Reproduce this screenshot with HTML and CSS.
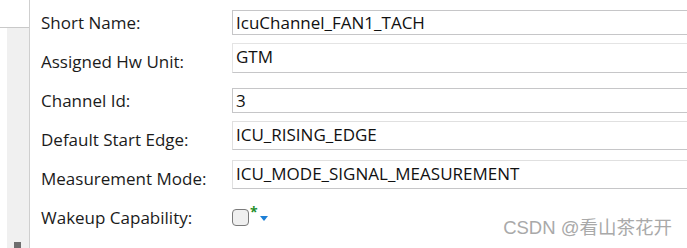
FILE: index.html
```html
<!DOCTYPE html>
<html lang="en">
<head>
    <meta charset="UTF-8">
    <title>Icu Channel</title>
    <link rel="stylesheet" href="styles.css">
</head>
<body>
<div class="page">
    <div class="side">
        <div class="side-head"></div>
        <div class="side-body">
            <div class="thumb"></div>
        </div>
    </div>
    <div class="form">
        <div class="row">
            <label>Short Name:</label>
            <div class="field">IcuChannel_FAN1_TACH</div>
        </div>
        <div class="row">
            <label>Assigned Hw Unit:</label>
            <div class="field tall up">GTM</div>
        </div>
        <div class="row">
            <label>Channel Id:</label>
            <div class="field">3</div>
        </div>
        <div class="row">
            <label>Default Start Edge:</label>
            <div class="field mid up">ICU_RISING_EDGE</div>
        </div>
        <div class="row">
            <label>Measurement Mode:</label>
            <div class="field mid up">ICU_MODE_SIGNAL_MEASUREMENT</div>
        </div>
        <div class="row">
            <label>Wakeup Capability:</label>
            <div class="check">
                <span class="box"></span>
                <span class="star">*</span>
                <svg class="drop" width="8" height="5" viewBox="0 0 8 5"><path d="M0 0H8L4 5Z" fill="#1c7fd6"/></svg>
            </div>
        </div>
    </div>
    <div class="mark">CSDN @看山茶花开</div>
</div>
</body>
</html>
```

FILE: styles.css
```css
*{
    margin: 0;
    padding: 0;
    box-sizing: border-box;
}
body{
    width: 687px;
    height: 248px;
    overflow: hidden;
    background: #fff;
    font-family: "Open Sans", "Noto Sans", sans-serif;
    color: #1b1b1b;
}
.page{
    position: relative;
    display: flex;
    height: 248px;
}
.side{
    flex-shrink: 0;
    width: 30px;
    border-right: 1px solid #cfcfcf;
    display: flex;
    flex-direction: column;
}
.side-head{
    height: 28px;
    border-bottom: 1px solid #c9c9c9;
}
.side-body{
    flex: 1;
    display: flex;
    flex-direction: column;
    justify-content: flex-end;
    background: linear-gradient(to right, #fff 7px, #f0f0f0 7px);
}
.thumb{
    width: 7px;
    height: 6px;
    margin-left: 14px;
    background: #6e6e6e;
}
.form{
    flex: 1;
    min-width: 0;
    padding-top: 3px;
    padding-left: 11px;
}
.row{
    display: flex;
    align-items: center;
    height: 39px;
}
.row label{
    flex-shrink: 0;
    width: 191px;
    font-size: 17px;
    line-height: 20px;
}
.field{
    flex-shrink: 0;
    width: 480px;
    height: 25px;
    border: 1px solid #c6c6c8;
    padding-left: 3px;
    font-size: 17px;
    line-height: 23px;
    color: #111;
}
.field.tall{
    height: 30px;
    line-height: 26px;
    border-top-color: #e4e4e4;
    border-left-color: #e4e4e4;
}
.field.mid{
    height: 29px;
    line-height: 26px;
    border-top-color: #e0e0e0;
    border-left-color: #e0e0e0;
}
.field.up{
    margin-bottom: 8px;
}
.check{
    display: flex;
    align-items: flex-start;
    height: 20px;
    padding-top: 1px;
}
.box{
    width: 17px;
    height: 17px;
    border: 1px solid #7a7a7a;
    border-radius: 4px;
    background: #efefef;
}
.star{
    color: #1f8f2a;
    font-size: 14px;
    line-height: 10px;
    font-weight: bold;
    margin-top: -2px;
    margin-left: 1px;
}
.drop{
    margin-top: 7px;
    margin-left: 2px;
}
.mark{
    position: absolute;
    right: 15px;
    bottom: 9px;
    font-family: "Liberation Sans", "Noto Sans CJK SC", sans-serif;
    font-size: 18.5px;
    color: #a9a9a9;
}
```
